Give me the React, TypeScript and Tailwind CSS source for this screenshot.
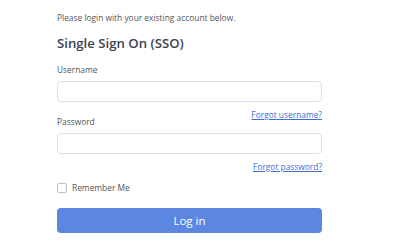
import React from "react";

export default function App() {
    return (
        <div className="min-h-screen bg-white" style={{ fontFamily: '"Open Sans", "Noto Sans", sans-serif' }}>
            <div className="ml-[57px] w-[265px] pt-[12px]">
                <p className="text-[8.4px] leading-[12px] text-[#555]">Please login with your existing account below.</p>

                <h1 className="mt-[9px] text-[13.2px] leading-[20px] font-semibold text-[#3b4250]">Single Sign On (SSO)</h1>

                <form className="mt-[11px]" onSubmit={(e) => e.preventDefault()}>
                    <label className="block text-[8.4px] leading-[12px] text-[#555]">Username</label>
                    <input
                        type="text"
                        className="mt-[5px] block w-full h-[21px] rounded-[4px] border border-[#dcdfe4] bg-white outline-none"
                    />
                    <div className="flex justify-end mt-[7px]">
                        <a href="#" className="text-[8.4px] leading-[12px] text-[#3b6fd6] underline">Forgot username?</a>
                    </div>

                    <label className="block -mt-[5px] text-[8.4px] leading-[12px] text-[#555]">Password</label>
                    <input
                        type="password"
                        className="mt-[5px] block w-full h-[21px] rounded-[4px] border border-[#dcdfe4] bg-white outline-none"
                    />
                    <div className="flex justify-end mt-[7px]">
                        <a href="#" className="text-[8.4px] leading-[12px] text-[#3b6fd6] underline">Forgot password?</a>
                    </div>

                    <label className="mt-[9px] flex items-center gap-[5px] text-[8.4px] leading-[12px] text-[#555]">
                        <span className="w-[10px] h-[10px] rounded-[2px] border border-[#b9bdc4] bg-white" />
                        Remember Me
                    </label>

                    <button
                        type="submit"
                        className="mt-[14px] w-full h-[25px] rounded-[4px] bg-[#5b86e2] text-white text-[11.5px] leading-[25px]"
                    >
                        Log in
                    </button>
                </form>
            </div>
        </div>
    );
}
